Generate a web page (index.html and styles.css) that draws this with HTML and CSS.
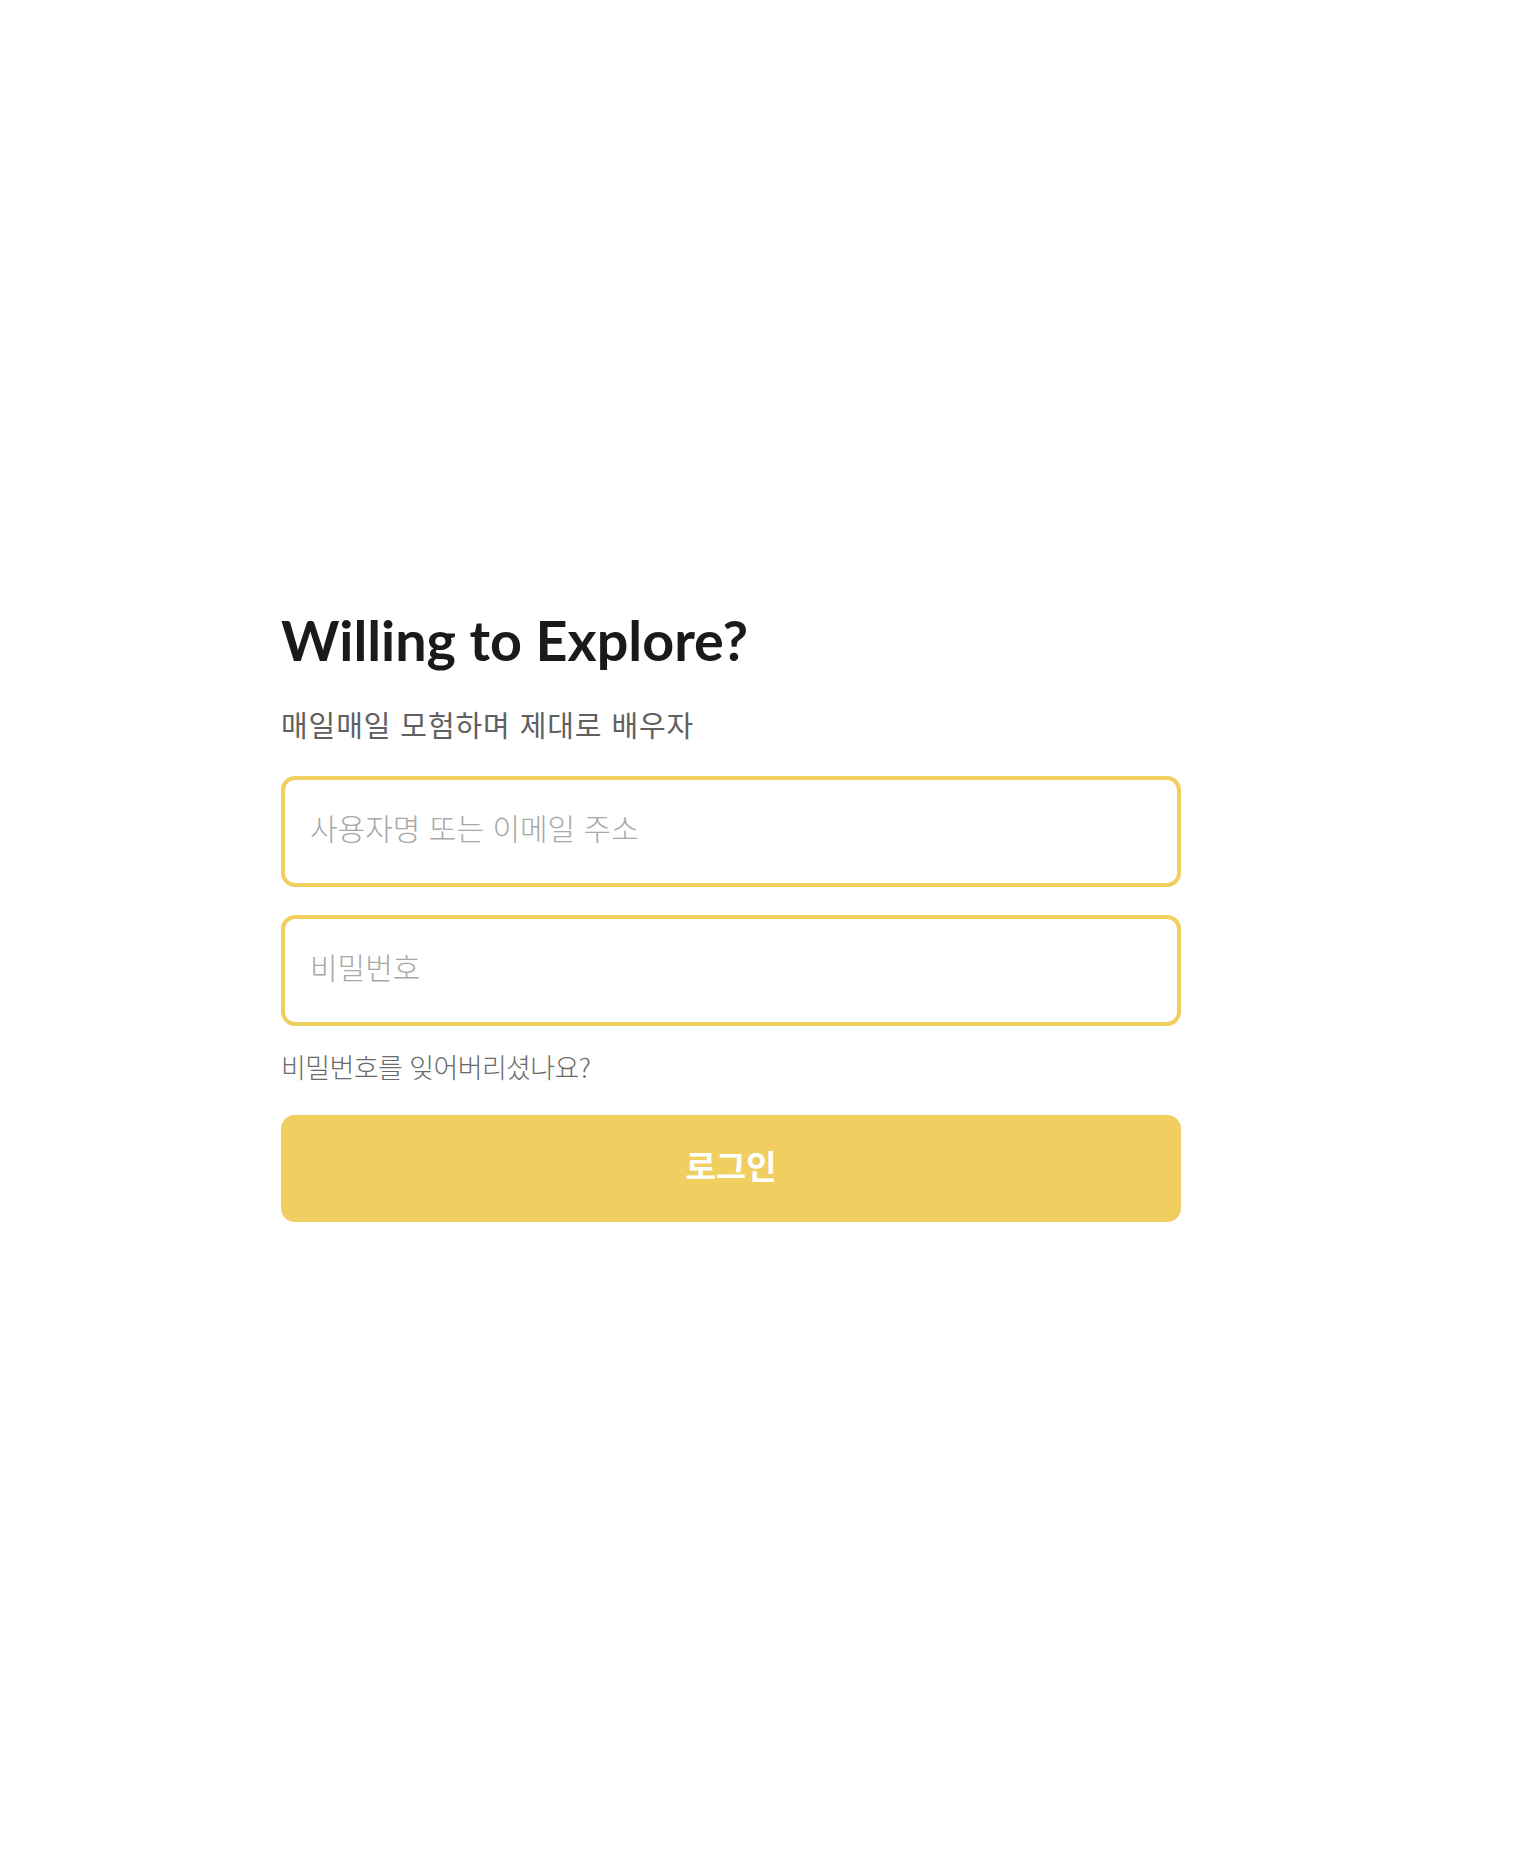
FILE: index.html
```html
<!DOCTYPE html>
<html lang="ko">
<head>
  <meta charset="UTF-8">
  <meta name="viewport" content="width=device-width, initial-scale=1.0">
  <title>Login</title>
  <link rel="stylesheet" href="styles.css">
</head>
<body>
  <div id="app">
    <form class="login">
      <h1 class="login-title">Willing to Explore?</h1>
      <p class="login-desc">매일매일 모험하며 제대로 배우자</p>
      <input class="login-input" type="text" placeholder="사용자명 또는 이메일 주소">
      <input class="login-input" type="password" placeholder="비밀번호">
      <a class="login-forgot">비밀번호를 잊어버리셨나요?</a>
      <button class="login-btn" type="button">로그인</button>
    </form>
  </div>
</body>
</html>
```

FILE: styles.css
```css
body {
  margin: 0;
  background-color: #fff;
  font-family: "Noto Sans CJK KR", "Noto Sans", sans-serif;
}
#app {
  padding: 606px 0 0 281px;
}
.login {
  display: flex;
  flex-direction: column;
  width: 900px;
}
.login-title {
  margin: 0;
  font-family: Lato, "Noto Sans CJK KR", sans-serif;
  font-size: 55.7px;
  line-height: 67px;
  font-weight: 700;
  color: #1a1a1a;
}
.login-desc {
  margin: 33px 0 0;
  font-size: 29px;
  line-height: 36px;
  color: #606060;
  letter-spacing: 0.9px;
}
.login-input {
  box-sizing: border-box;
  height: 111px;
  margin-top: 34px;
  padding: 0 25px 10px;
  border: 4px solid #f0ce60;
  border-radius: 14px;
  font-family: inherit;
  font-size: 30px;
  font-weight: 300;
  outline: none;
}
.login-input + .login-input {
  margin-top: 28px;
}
.login-input::placeholder {
  color: #a8a8a8;
}
.login-forgot {
  margin-top: 23px;
  margin-bottom: 3px;
  font-size: 27px;
  line-height: 36px;
  font-weight: 300;
  color: #6a6a6a;
  letter-spacing: -0.6px;
}
.login-btn {
  height: 107px;
  margin-top: 27px;
  padding-bottom: 8px;
  border: none;
  border-radius: 14px;
  background-color: #f0ce60;
  color: #fff;
  font-family: inherit;
  font-size: 33px;
  font-weight: 700;
}
```
